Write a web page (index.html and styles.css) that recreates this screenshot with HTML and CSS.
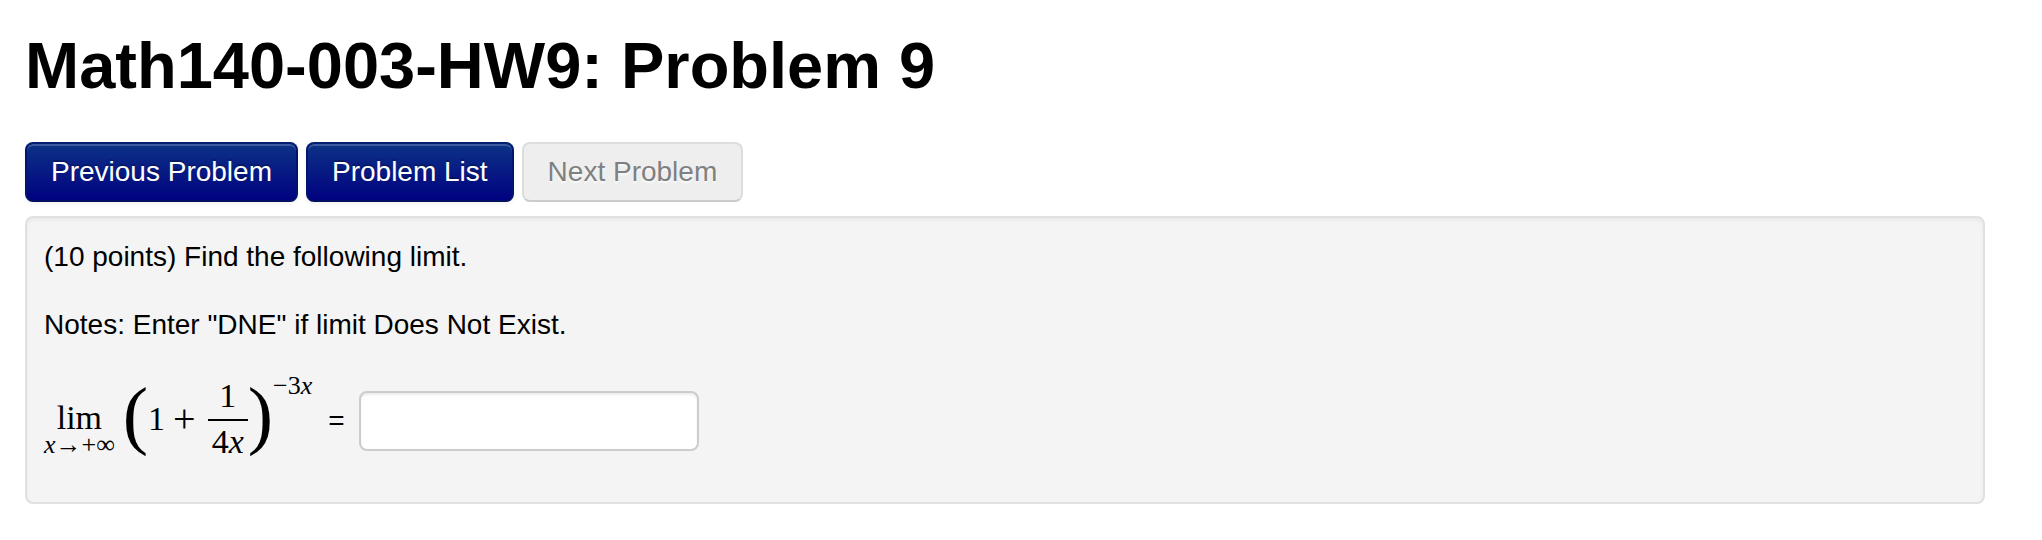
FILE: index.html
```html
<!DOCTYPE html>
<html lang="en">
<head>
    <meta charset="UTF-8">
    <meta name="viewport" content="width=device-width, initial-scale=1.0">
    <title>Math140-003-HW9: Problem 9</title>
    <link rel="stylesheet" href="styles.css">
</head>
<body>

    <h1>Math140-003-HW9: Problem 9</h1>

    <nav class="problem-nav">
        <a class="btn btn-primary" href="#previous">Previous Problem</a>
        <a class="btn btn-primary" href="#list">Problem List</a>
        <button class="btn" type="button" disabled>Next Problem</button>
    </nav>

    <form class="problem">
        <p>(10 points) Find the following limit.</p>
        <p>Notes: Enter "DNE" if limit Does Not Exist.</p>

        <div class="answer-row">
            <!-- Limit expression -->
            <div class="math" id="expression">
                <span class="limit">
                    <span class="lim">lim</span>
                    <span class="under"><i>x</i>→+∞</span>
                </span>
                <span class="paren">(</span>
                <span class="term">1</span>
                <span class="term operator">+</span>
                <span class="fraction">
                    <span class="numerator">1</span>
                    <span class="denominator">4<i>x</i></span>
                </span>
                <span class="paren">)</span>
                <span class="power">−3<i>x</i></span>
            </div>
            <label for="answer">=</label>
            <input type="text" id="answer" aria-describedby="expression">
        </div>
    </form>

</body>
</html>
```
FILE: styles.css
```css
* {
    box-sizing: border-box;
}
body {
    font-family: "Liberation Sans", Arial, sans-serif;
    font-size: 28px;
    line-height: 34px;
    color: #000;
    background: #fff;
    margin: 0;
    padding: 26px 57px 36px 25px;
}
h1 {
    font-size: 65px;
    line-height: 80px;
    margin: 0 0 36px;
}
.problem-nav {
    display: flex;
    gap: 8px;
    margin-bottom: 14px;
}
.btn {
    font-family: inherit;
    font-size: 28px;
    line-height: 40px;
    padding: 8px 24px;
    border: 2px solid #ddd;
    border-bottom-color: #ccc;
    border-radius: 8px;
    background: #eee;
    color: #808080;
    text-decoration: none;
    text-shadow: 0 2px 2px rgba(255, 255, 255, 0.75);
}
.btn-primary {
    color: #fff;
    background: linear-gradient(#0d3486, #000080) border-box;
    border-color: #001f70 #001470 #001060;
    text-shadow: 0 -2px 0 rgba(0, 0, 0, 0.25);
    box-shadow: inset 0 2px 0 rgba(255, 255, 255, 0.2), 0 2px 4px rgba(0, 0, 0, 0.05);
}
.problem {
    padding: 22px 17px 36px;
    background: #f4f4f4;
    border: 2px solid #e1e1e1;
    border-radius: 8px;
    box-shadow: inset 0 2px 4px rgba(0, 0, 0, 0.05);
}
.problem p {
    margin: 0 0 34px;
}
.answer-row {
    display: flex;
    align-items: center;
}
.math {
    display: flex;
    align-items: center;
    font-family: "Liberation Serif", "Times New Roman", serif;
    font-size: 34px;
}
.limit {
    display: flex;
    flex-direction: column;
    align-items: center;
    margin-right: 8px;
    padding-top: 20px;
}
.lim {
    line-height: 28px;
}
.under {
    font-size: 26px;
    line-height: 26px;
}
.paren {
    font-size: 76px;
    line-height: 76px;
    padding-bottom: 14px;
}
.term {
    padding-bottom: 4px;
}
.operator {
    font-size: 40px;
    margin: 0 8px;
}
.fraction {
    display: flex;
    flex-direction: column;
    text-align: center;
    margin-left: 4px;
    padding-bottom: 4px;
}
.numerator {
    border-bottom: 2px solid #000;
    padding-bottom: 6px;
}
.denominator {
    padding: 4px 4px 0;
}
.power {
    font-size: 26px;
    line-height: 20px;
    align-self: flex-start;
}
label {
    margin: 0 14px 0 16px;
}
input {
    width: 340px;
    height: 60px;
    padding: 8px 12px;
    font-family: inherit;
    font-size: 28px;
    background: #fff;
    border: 2px solid #ccc;
    border-radius: 8px;
    box-shadow: inset 0 2px 2px rgba(0, 0, 0, 0.075);
}
```
